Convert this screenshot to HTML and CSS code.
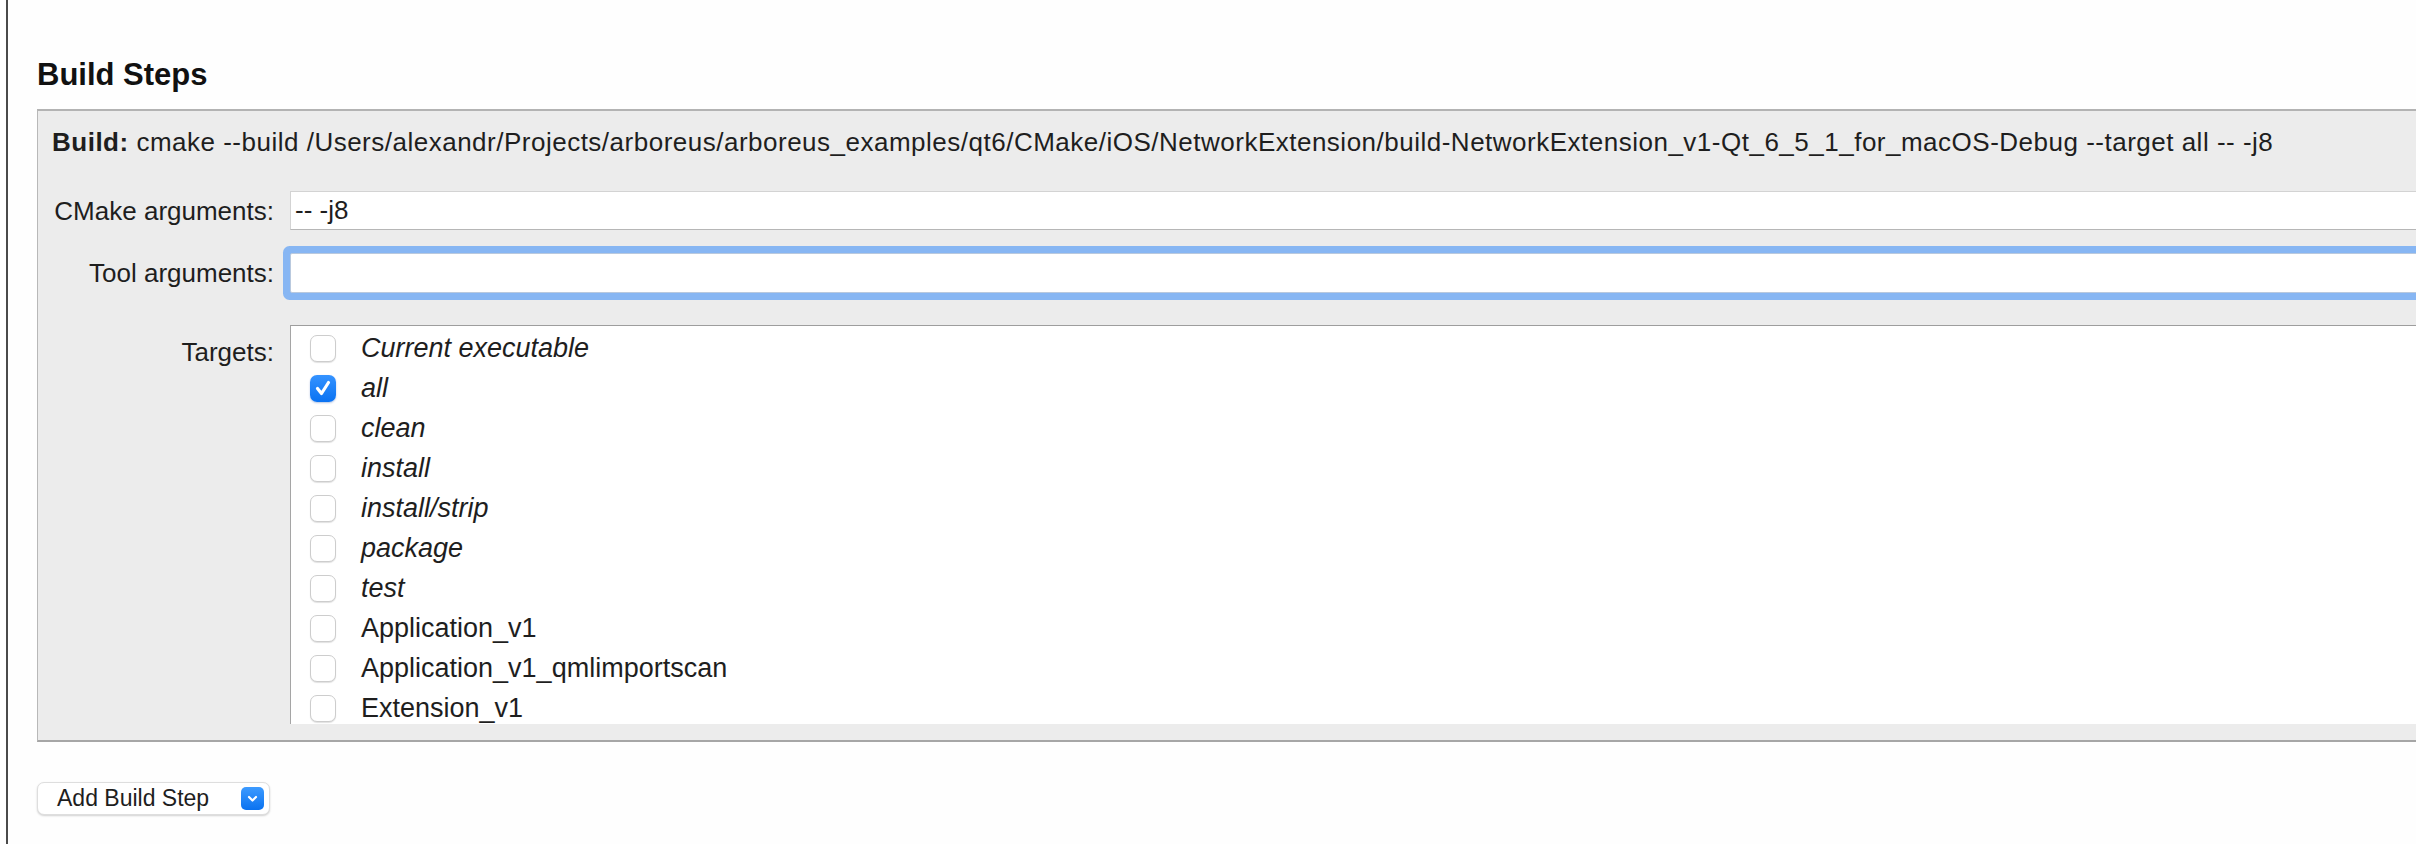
FILE: index.html
```html
<!DOCTYPE html>
<html lang="en">
<head>
    <meta charset="UTF-8">
    <meta name="viewport" content="width=device-width, initial-scale=1.0">
    <title>Build Steps</title>
    <link rel="stylesheet" href="styles.css">
</head>
<body>
    <div class="page">
        <h2 class="section-title">Build Steps</h2>

        <div class="step-panel">
            <div class="step-summary"><strong>Build:</strong> cmake --build /Users/alexandr/Projects/arboreus/arboreus_examples/qt6/CMake/iOS/NetworkExtension/build-NetworkExtension_v1-Qt_6_5_1_for_macOS-Debug --target all -- -j8</div>

            <div class="form-row row-cmake">
                <label class="form-label" for="cmakeArgs">CMake arguments:</label>
                <input class="text-field" type="text" id="cmakeArgs" value="-- -j8">
            </div>

            <div class="form-row row-tool">
                <label class="form-label" for="toolArgs">Tool arguments:</label>
                <input class="text-field focused" type="text" id="toolArgs">
            </div>

            <div class="form-row row-targets">
                <label class="form-label">Targets:</label>
                <ul class="target-list">
                    <li><span class="check"></span><em>Current executable</em></li>
                    <li><span class="check checked"><svg viewBox="0 0 26 26" width="26" height="26"><path d="M7.5 13.5 L11.5 18.5 L18.5 7.5" fill="none" stroke="#fff" stroke-width="3.2" stroke-linecap="round" stroke-linejoin="round"/></svg></span><em>all</em></li>
                    <li><span class="check"></span><em>clean</em></li>
                    <li><span class="check"></span><em>install</em></li>
                    <li><span class="check"></span><em>install/strip</em></li>
                    <li><span class="check"></span><em>package</em></li>
                    <li><span class="check"></span><em>test</em></li>
                    <li><span class="check"></span>Application_v1</li>
                    <li><span class="check"></span>Application_v1_qmlimportscan</li>
                    <li><span class="check"></span>Extension_v1</li>
                </ul>
            </div>
        </div>

        <div class="add-step">
            <span>Add Build Step</span>
            <span class="add-step-arrow"><svg viewBox="0 0 23 23" width="23" height="23"><path d="M8 10 L11.5 13.5 L15 10" fill="none" stroke="#fff" stroke-width="2.2" stroke-linecap="round" stroke-linejoin="round"/></svg></span>
        </div>
    </div>
</body>
</html>
```

FILE: styles.css
```css
body {
    font-family: "Liberation Sans", Arial, sans-serif;
    margin: 0;
    padding: 0;
    background-color: #fefefe;
    color: #1e1e1e;
    overflow: hidden;
}

.page {
    width: 2700px;
    min-height: 844px;
    margin-left: 6px;
    padding-left: 29px;
    border-left: 2px solid #4a4a4a;
    box-sizing: border-box;
}

.section-title {
    margin: 0 0 17px 0;
    padding-top: 57px;
    font-size: 31px;
    line-height: 35px;
    font-weight: bold;
    color: #111;
}

.step-panel {
    background-color: #ececec;
    border-top: 2px solid #b3b3b3;
    border-bottom: 2px solid #a6a6a6;
    border-left: 1px solid #b8b8b8;
    padding: 0 0 16px 14px;
}

.step-summary {
    padding-top: 16px;
    font-size: 26px;
    line-height: 30px;
    letter-spacing: 0.5px;
    white-space: nowrap;
}

.form-row {
    display: grid;
    grid-template-columns: 222px 1fr;
    column-gap: 16px;
    align-items: center;
}

.row-cmake {
    margin-top: 34px;
}

.row-tool {
    margin-top: 23px;
}

.row-targets {
    margin-top: 32px;
    align-items: start;
}

.form-label {
    text-align: right;
    font-size: 26px;
    line-height: 30px;
    white-space: nowrap;
}

.row-targets .form-label {
    padding-top: 12px;
}

.text-field {
    box-sizing: border-box;
    height: 39px;
    margin: 0;
    padding: 0 4px;
    background: #fff;
    border: 1px solid #d3d3d3;
    border-bottom-color: #b6b6b6;
    border-radius: 0;
    font-family: inherit;
    font-size: 26px;
    color: #1e1e1e;
    outline: none;
}

.text-field.focused {
    height: 40px;
    border-color: #b9c9de;
    border-radius: 2px;
    box-shadow: 0 0 0 7px #87b6f3;
}

.target-list {
    list-style-type: none;
    margin: 0;
    padding: 2px 0 0 19px;
    height: 399px;
    box-sizing: border-box;
    background: #fff;
    border-top: 1px solid #9d9d9d;
    border-left: 1px solid #a5a5a5;
    overflow: hidden;
}

.target-list li {
    display: flex;
    align-items: center;
    height: 40px;
    font-size: 27px;
    white-space: nowrap;
}

.check {
    width: 26px;
    height: 27px;
    margin-right: 25px;
    flex-shrink: 0;
    box-sizing: border-box;
    background: #fff;
    border: 1px solid #cdcdcd;
    border-radius: 7px;
    box-shadow: 0 1px 1px rgba(0, 0, 0, 0.12);
}

.check.checked {
    border: none;
    background: linear-gradient(#3593ff, #0a72f2);
    box-shadow: 0 1px 2px rgba(0, 60, 160, 0.3);
}

.check svg {
    display: block;
}

.add-step {
    display: flex;
    justify-content: space-between;
    align-items: center;
    width: 233px;
    height: 33px;
    margin-top: 40px;
    padding: 0 5px 0 19px;
    box-sizing: border-box;
    background: #fff;
    border-radius: 7px;
    border: 1px solid #dedede;
    box-shadow: 0 1px 2px rgba(0, 0, 0, 0.18);
    font-size: 23px;
    color: #1e1e1e;
}

.add-step-arrow {
    width: 23px;
    height: 23px;
    border-radius: 5px;
    background: linear-gradient(#3d9bff, #0a72f0);
}

.add-step-arrow svg {
    display: block;
}
```
